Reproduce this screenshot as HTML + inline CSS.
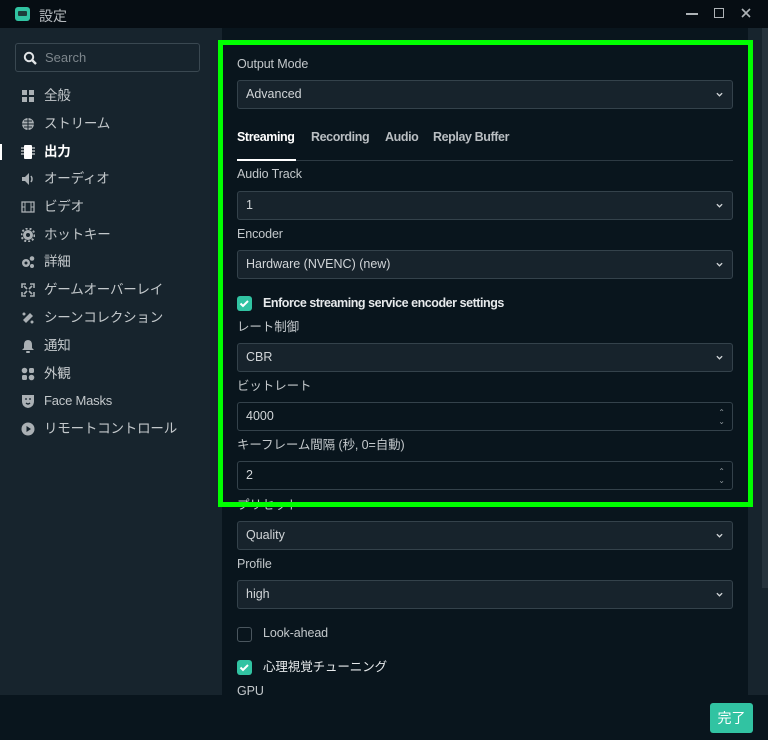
<!DOCTYPE html>
<html><head><meta charset="utf-8"><style>
*{box-sizing:border-box;margin:0;padding:0}
body{width:768px;height:740px;overflow:hidden;background:#17242d;font-family:"Liberation Sans","Noto Sans CJK JP",sans-serif;color:#c9cdd0;position:relative;font-size:13px}
svg{display:block}
.title{position:absolute;left:0;top:0;width:768px;height:28px;background:#060d13}
.logo{position:absolute;left:15px;top:7px;width:15px;height:14px;background:#31c3a2;border-radius:3px}
.logo:after{content:"";position:absolute;left:3px;top:4px;width:9px;height:5px;background:#1d3d3a;border-radius:1px}
.ttxt{position:absolute;left:39px;top:6px;font-size:14px;color:#b5babe}
.side{position:absolute;left:0;top:28px;width:218px;height:667px;background:#17242d}
.search{position:absolute;left:15px;top:43px;width:185px;height:29px;border:1px solid #3a4851;border-radius:3px;background:#17242d}
.search span{position:absolute;left:29px;top:6px;color:#7d868c;font-size:13px}
.nav{position:absolute;left:44px;font-size:13.5px;line-height:18px;height:18px;color:#c3c8cb;letter-spacing:-0.2px}
.ic{position:absolute;left:21px;width:14px;height:14px}
.active{color:#fff;font-weight:bold}
.bar{position:absolute;left:0;top:144px;width:2px;height:16px;background:#fff}
.content{position:absolute;left:222px;top:28px;width:526px;height:667px;background:#09151d}
.sb{position:absolute;left:762px;top:28px;width:6px;height:560px;background:#26333c}
.lbl{position:absolute;left:237px;font-size:12.5px;line-height:16px;color:#c3c8cb;letter-spacing:-0.1px}
.sel{position:absolute;left:237px;width:496px;height:29px;border:1px solid #34424b;border-radius:3px;background:#17232c;padding:6px 0 0 8px;font-size:12.5px;color:#d1d5d8}
.inp{background:#09151d}
.chev{position:absolute;right:9px;top:10px;width:7px;height:7px}
.spin{position:absolute;right:7px;top:5px;font-size:8px;line-height:9px;color:#8d959a}
.tabs{position:absolute;top:130px;font-size:12.5px;font-weight:bold;color:#b9bec2;letter-spacing:-0.4px}
.cb{position:absolute;left:237px;width:15px;height:15px;border-radius:3px;background:#31c3a2}
.cbe{background:none;border:1px solid #4a565e}
.foot{position:absolute;left:0;top:695px;width:768px;height:45px;background:#09151d}
.btn{position:absolute;left:710px;top:703px;width:43px;height:30px;background:#31c3a2;border-radius:3px;color:#fff;font-size:14px;text-align:center;line-height:30px}
.green{position:absolute;left:218px;top:40px;width:535px;height:467px;border:5px solid #00ff00}
</style></head><body>
<div class="title"><div class="logo"></div><div class="ttxt">設定</div>
<div style="position:absolute;left:686px;top:13px;width:12px;height:2px;background:#aeb3b7"></div>
<div style="position:absolute;left:714px;top:8px;width:10px;height:10px;border:1.5px solid #aeb3b7"></div>
<svg style="position:absolute;left:741px;top:8px" width="10" height="10" viewBox="0 0 10 10"><path d="M1 1l8 8M9 1l-8 8" stroke="#aeb3b7" stroke-width="1.6"/></svg></div>
<div class="side"></div>
<div class="search"><svg style="position:absolute;left:7px;top:7px" width="14" height="14" viewBox="0 0 14 14"><circle cx="6" cy="6" r="4.2" fill="none" stroke="#e2e5e7" stroke-width="2"/><path d="M9 9l4 4" stroke="#e2e5e7" stroke-width="2.4"/></svg><span>Search</span></div>
<svg class="ic" style="top:89px" viewBox="0 0 14 14" fill="#aab0b4"><rect x="1" y="1" width="5" height="5"/><rect x="8" y="1" width="5" height="5"/><rect x="1" y="8" width="5" height="5"/><rect x="8" y="8" width="5" height="5"/></svg><div class="nav" style="top:87px">全般</div>
<svg class="ic" style="top:117px" viewBox="0 0 14 14"><circle cx="7" cy="7" r="6" fill="#aab0b4"/><path d="M1 7h12M7 1v12M3 4h8M3 10h8" stroke="#17242d" stroke-width="1"/></svg><div class="nav" style="top:115px">ストリーム</div>
<div class="bar"></div>
<svg class="ic" style="top:145px" viewBox="0 0 14 14"><rect x="3" y="0" width="8" height="14" rx="1" fill="#fff"/><path d="M0 3h3M0 6h3M0 9h3M11 3h3M11 6h3M11 9h3" stroke="#fff"/></svg><div class="nav active" style="top:143px">出力</div>
<svg class="ic" style="top:172px" viewBox="0 0 14 14" fill="#aab0b4"><path d="M1 5h3l4-4v12l-4-4H1z"/><path d="M10 4q2 3 0 6" stroke="#aab0b4" stroke-width="1.5" fill="none"/></svg><div class="nav" style="top:170px">オーディオ</div>
<svg class="ic" style="top:200px" viewBox="0 0 14 14"><rect x="1" y="2" width="12" height="10" fill="none" stroke="#aab0b4" stroke-width="1.3"/><path d="M4 2v10M10 2v10M1 7h3M10 7h3" stroke="#aab0b4"/></svg><div class="nav" style="top:198px">ビデオ</div>
<svg class="ic" style="top:228px" viewBox="0 0 14 14"><circle cx="7" cy="7" r="5" fill="#aab0b4"/><circle cx="7" cy="7" r="6.5" fill="none" stroke="#aab0b4" stroke-width="2" stroke-dasharray="2 2"/><circle cx="7" cy="7" r="2" fill="#17242d"/></svg><div class="nav" style="top:226px">ホットキー</div>
<svg class="ic" style="top:255px" viewBox="0 0 14 14"><circle cx="5" cy="8" r="4" fill="#aab0b4"/><circle cx="5" cy="8" r="1.5" fill="#17242d"/><circle cx="11" cy="3.5" r="2.3" fill="#aab0b4"/><circle cx="11" cy="11" r="2" fill="#aab0b4"/></svg><div class="nav" style="top:253px">詳細</div>
<svg class="ic" style="top:283px" viewBox="0 0 14 14" fill="none" stroke="#aab0b4" stroke-width="1.6"><path d="M1 5V1h4M9 1h4v4M13 9v4H9M5 13H1V9M3 3l3 3M11 3L8 6M11 11L8 8M3 11l3-3"/></svg><div class="nav" style="top:281px">ゲームオーバーレイ</div>
<svg class="ic" style="top:311px" viewBox="0 0 14 14" fill="#aab0b4"><path d="M2 9l7-7 3 3-7 7z"/><circle cx="3" cy="3" r="1.5"/><circle cx="11" cy="11" r="1.5"/></svg><div class="nav" style="top:309px">シーンコレクション</div>
<svg class="ic" style="top:339px" viewBox="0 0 14 14" fill="#aab0b4"><path d="M7 1q4 0 4 5v3l2 2H1l2-2V6q0-5 4-5z"/><rect x="5" y="12" width="4" height="2" rx="1"/></svg><div class="nav" style="top:337px">通知</div>
<svg class="ic" style="top:367px" viewBox="0 0 14 14" fill="#aab0b4"><circle cx="3.5" cy="3.5" r="2.8"/><rect x="8" y="1" width="5" height="5" rx="1.5"/><rect x="1" y="8" width="5" height="5" rx="1.5"/><circle cx="10.5" cy="10.5" r="2.8"/></svg><div class="nav" style="top:365px">外観</div>
<svg class="ic" style="top:394px" viewBox="0 0 14 14"><path d="M1 1h12v6q0 6-6 7-6-1-6-7z" fill="#aab0b4"/><path d="M4 5h2M8 5h2M5 9q2 2 4 0" stroke="#17242d" stroke-width="1.3" fill="none"/></svg><div class="nav" style="top:392px;font-size:13px">Face Masks</div>
<svg class="ic" style="top:422px" viewBox="0 0 14 14"><circle cx="7" cy="7" r="6.5" fill="#aab0b4"/><path d="M5.5 4v6l4.5-3z" fill="#17242d"/></svg><div class="nav" style="top:420px">リモートコントロール</div>

<div class="content"></div>
<div class="sb"></div>

<div class="lbl" style="top:56px">Output Mode</div>
<div class="sel" style="top:80px">Advanced<svg class="chev" viewBox="0 0 8 8"><path d="M1 2.5l3 3 3-3" stroke="#d1d5d8" stroke-width="1.6" fill="none"/></svg></div>
<div class="tabs" style="left:237px;color:#fff">Streaming</div>
<div class="tabs" style="left:311px">Recording</div>
<div class="tabs" style="left:385px">Audio</div>
<div class="tabs" style="left:433px">Replay Buffer</div>
<div style="position:absolute;left:237px;top:160px;width:496px;height:1px;background:#2d3a43"></div>
<div style="position:absolute;left:237px;top:159px;width:59px;height:2px;background:#fff"></div>
<div class="lbl" style="top:166px">Audio Track</div>
<div class="sel" style="top:191px">1<svg class="chev" viewBox="0 0 8 8"><path d="M1 2.5l3 3 3-3" stroke="#d1d5d8" stroke-width="1.6" fill="none"/></svg></div>
<div class="lbl" style="top:226px">Encoder</div>
<div class="sel" style="top:250px">Hardware (NVENC) (new)<svg class="chev" viewBox="0 0 8 8"><path d="M1 2.5l3 3 3-3" stroke="#d1d5d8" stroke-width="1.6" fill="none"/></svg></div>
<div class="cb" style="top:296px"><svg width="15" height="15" viewBox="0 0 15 15"><path d="M3.5 7.5l2.5 2.5 5-5" stroke="#fff" stroke-width="2" fill="none"/></svg></div>
<div class="lbl" style="left:263px;top:295px;color:#e6e9eb;font-weight:bold;letter-spacing:-0.45px">Enforce streaming service encoder settings</div>
<div class="lbl" style="top:319px">レート制御</div>
<div class="sel" style="top:343px">CBR<svg class="chev" viewBox="0 0 8 8"><path d="M1 2.5l3 3 3-3" stroke="#d1d5d8" stroke-width="1.6" fill="none"/></svg></div>
<div class="lbl" style="top:378px">ビットレート</div>
<div class="sel inp" style="top:402px">4000<div class="spin">⌃<br>⌄</div></div>
<div class="lbl" style="top:437px">キーフレーム間隔 (秒, 0=自動)</div>
<div class="sel inp" style="top:461px">2<div class="spin">⌃<br>⌄</div></div>
<div class="lbl" style="top:497px">プリセット</div>
<div class="sel" style="top:521px">Quality<svg class="chev" viewBox="0 0 8 8"><path d="M1 2.5l3 3 3-3" stroke="#d1d5d8" stroke-width="1.6" fill="none"/></svg></div>
<div class="lbl" style="top:556px">Profile</div>
<div class="sel" style="top:580px">high<svg class="chev" viewBox="0 0 8 8"><path d="M1 2.5l3 3 3-3" stroke="#d1d5d8" stroke-width="1.6" fill="none"/></svg></div>
<div class="cb cbe" style="top:627px"></div>
<div class="lbl" style="left:263px;top:625px">Look-ahead</div>
<div class="cb" style="top:660px"><svg width="15" height="15" viewBox="0 0 15 15"><path d="M3.5 7.5l2.5 2.5 5-5" stroke="#fff" stroke-width="2" fill="none"/></svg></div>
<div class="lbl" style="left:263px;top:659px;color:#e6e9eb">心理視覚チューニング</div>
<div class="lbl" style="top:683px">GPU</div>

<div class="green"></div>
<div class="foot"></div>
<div class="btn">完了</div>
</body></html>
